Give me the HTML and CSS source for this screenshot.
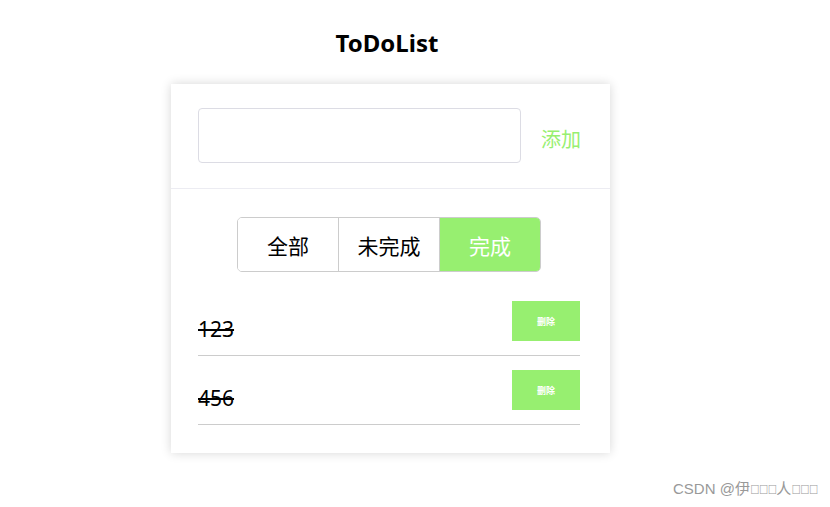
FILE: index.html
```html
<!DOCTYPE html>
<html lang="zh">
<head>
<meta charset="utf-8">
<title>ToDoList</title>
<link rel="stylesheet" href="styles.css">
</head>
<body>
<div class="app">
  <h1 class="title">ToDoList</h1>
  <div class="card">
    <div class="header">
      <input class="todo-input" type="text">
      <button class="add-btn">添加</button>
    </div>
    <div class="filters">
      <button class="filter">全部</button>
      <button class="filter">未完成</button>
      <button class="filter active">完成</button>
    </div>
    <ul class="list">
      <li class="item"><span class="item-text done">123</span><button class="del-btn">删除</button></li>
      <li class="item"><span class="item-text done">456</span><button class="del-btn">删除</button></li>
    </ul>
  </div>
</div>
<div class="watermark">CSDN @伊<span class="tofu">&#xE001;&#xE002;&#xE003;</span>人<span class="tofu">&#xE004;&#xE005;&#xE006;</span></div>
</body>
</html>
```
FILE: styles.css
```css
html, body {
  margin: 0;
  padding: 0;
  background: #fff;
}
body {
  font-family: "Noto Sans", "Noto Sans CJK SC", sans-serif;
  color: #000;
  height: 507px;
  position: relative;
}
.app {
  width: 439px;
  margin-left: 171px;
  padding-top: 26px;
}
.title {
  margin: 0 0 25px;
  font-size: 24px;
  line-height: 33px;
  font-weight: 700;
  text-align: center;
  padding-right: 7px;
}
.card {
  background: #fff;
  box-shadow: 0 0 10px rgba(0, 0, 0, 0.16);
  padding-bottom: 28px;
}
.header {
  display: flex;
  align-items: center;
  padding: 24px 29px 25px 27px;
  border-bottom: 1px solid #ececf2;
}
.todo-input {
  box-sizing: border-box;
  width: 323px;
  height: 55px;
  border: 1px solid #dcdce4;
  border-radius: 4px;
  outline: none;
  margin: 0 20px 0 0;
  padding: 0 10px;
}
.add-btn {
  border: none;
  background: none;
  padding: 0;
  margin-top: 6px;
  font-family: "Noto Sans CJK SC", sans-serif;
  font-size: 20px;
  line-height: 24px;
  color: #97ef70;
}
.filters {
  display: flex;
  width: 304px;
  margin: 28px 0 29px 66px;
  border: 1px solid #cccccc;
  border-radius: 5px;
  overflow: hidden;
  box-sizing: border-box;
  height: 55px;
}
.filter {
  flex: 1;
  border: none;
  background: #fff;
  font-family: "Noto Sans CJK SC", sans-serif;
  font-size: 21px;
  color: #000;
  padding: 0;
}
.filter + .filter {
  border-left: 1px solid #cccccc;
}
.filter.active {
  background: #97ef70;
  color: #fff;
}
.list {
  list-style: none;
  margin: 0;
  padding: 0 30px 0 27px;
}
.item {
  display: flex;
  justify-content: space-between;
  align-items: flex-start;
  height: 54px;
  border-bottom: 1px solid #cccccc;
}
.item + .item {
  margin-top: 14px;
}
.item-text {
  margin-top: 17px;
  font-size: 21px;
  line-height: 22px;
}
.item-text.done {
  text-decoration: line-through;
}
.del-btn {
  width: 68px;
  height: 40px;
  border: none;
  background: #97ef70;
  color: #fff;
  font-family: "Noto Sans CJK SC", sans-serif;
  font-size: 9px;
  font-weight: 700;
  padding: 0;
}
.watermark {
  position: absolute;
  left: 673px;
  top: 479px;
  font-family: "Liberation Sans", "Noto Sans CJK SC", sans-serif;
  font-size: 15px;
  line-height: 20px;
  color: #999;
  white-space: nowrap;
}
.tofu {
  font-size: 13px;
  letter-spacing: -1px;
}
```
